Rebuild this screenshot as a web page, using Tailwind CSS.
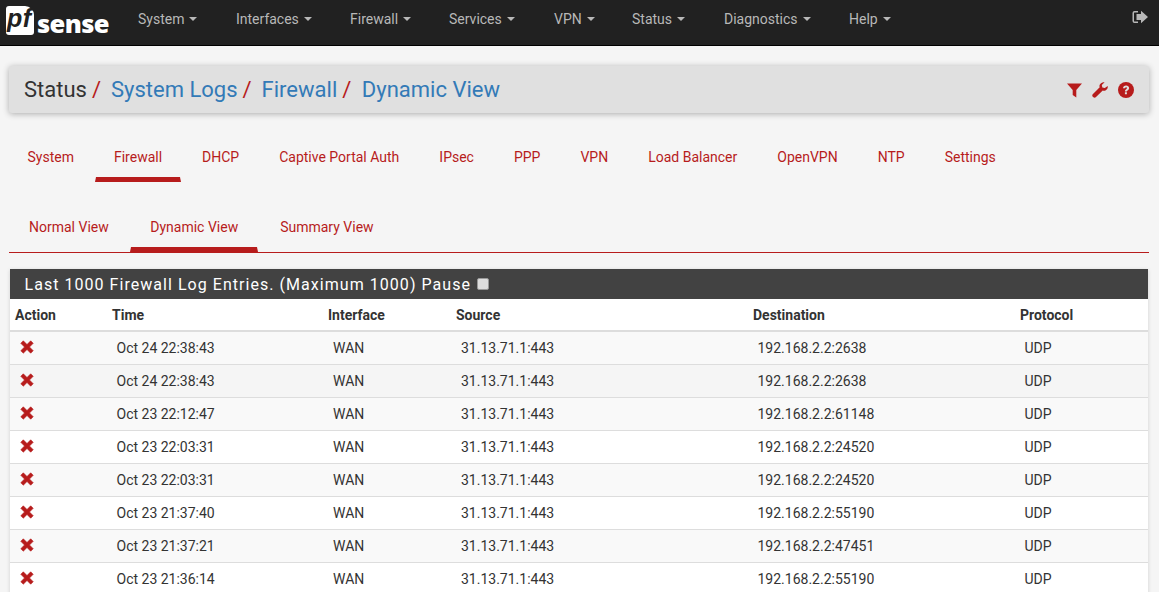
<!DOCTYPE html>
<html lang="en">
<head>
  <meta charset="UTF-8">
  <title>Status: System Logs: Firewall: Dynamic View</title>
  <script src="https://cdn.jsdelivr.net/npm/@tailwindcss/browser@4"></script>
</head>
<body class="bg-[#f5f5f5] h-[592px] overflow-hidden font-['Roboto',sans-serif] text-[14px] text-[#333]">
  <!-- navbar -->
  <nav class="h-[46px] bg-[#212121] border-b border-black flex items-start relative">
    <div class="w-[110px] h-[45px] pl-[6px] pt-[6px] flex items-start shrink-0">
      <div class="w-[28px] h-[29px] bg-white rounded-tr-[9px] rounded-l-[3px] rounded-br-[3px] text-[#212121] font-['Liberation_Sans',sans-serif] font-bold italic text-[25px] leading-[25px] tracking-[0.5px] pl-[1px]">pf</div>
      <span class="text-white font-['Open_Sans',sans-serif] font-extrabold text-[25.500px] leading-[40px] tracking-[-0.6px] ml-[3px] -mt-[3px]">sense</span>
    </div>
    <ul class="flex text-[#b8b8b8] leading-[20px] pt-[9px]">
      <li class="w-[98px] pl-[28px] flex items-center gap-[5px]">System <span class="w-0 h-0 border-x-4 border-x-transparent border-t-4 border-t-[#b8b8b8]"></span></li>
      <li class="w-[114px] pl-[28px] flex items-center gap-[5px]">Interfaces <span class="w-0 h-0 border-x-4 border-x-transparent border-t-4 border-t-[#b8b8b8]"></span></li>
      <li class="w-[99px] pl-[28px] flex items-center gap-[5px]">Firewall <span class="w-0 h-0 border-x-4 border-x-transparent border-t-4 border-t-[#b8b8b8]"></span></li>
      <li class="w-[105px] pl-[28px] flex items-center gap-[5px]">Services <span class="w-0 h-0 border-x-4 border-x-transparent border-t-4 border-t-[#b8b8b8]"></span></li>
      <li class="w-[78px] pl-[28px] flex items-center gap-[5px]">VPN <span class="w-0 h-0 border-x-4 border-x-transparent border-t-4 border-t-[#b8b8b8]"></span></li>
      <li class="w-[92px] pl-[28px] flex items-center gap-[5px]">Status <span class="w-0 h-0 border-x-4 border-x-transparent border-t-4 border-t-[#b8b8b8]"></span></li>
      <li class="w-[125px] pl-[28px] flex items-center gap-[5px]">Diagnostics <span class="w-0 h-0 border-x-4 border-x-transparent border-t-4 border-t-[#b8b8b8]"></span></li>
      <li class="pl-[28px] flex items-center gap-[5px]">Help <span class="w-0 h-0 border-x-4 border-x-transparent border-t-4 border-t-[#b8b8b8]"></span></li>
    </ul>
    <svg class="absolute left-[1132px] top-[10px] w-[16px] h-[15px]" viewBox="0 0 16 15" fill="#b8b8b8">
      <path d="M6 1H2.500A2 2 0 0 0 .5 3v8a2 2 0 0 0 2 2H6v-1.500H2.500a.5.5 0 0 1-.5-.5V3a.5.5 0 0 1 .5-.5H6z"/>
      <path d="M9 .8 16 7l-7 6.200V10H4.500V4H9z"/>
    </svg>
  </nav>

  <main class="pl-[9px] pr-[10px]">
    <!-- breadcrumb -->
    <div class="mt-[20px] h-[47px] bg-[#e0e0e0] rounded-[3px] shadow-[0_1px_6px_rgba(0,0,0,0.3)] flex items-center pl-[15px] pr-[15px] text-[22px] leading-[24px]">
      <span>Status</span><span class="text-[#b71c1c] ml-[5px]">/</span>
      <a class="text-[#337ab7] ml-[10px]">System Logs</a><span class="text-[#b71c1c] ml-[5px]">/</span>
      <a class="text-[#337ab7] ml-[10px]">Firewall</a><span class="text-[#b71c1c] ml-[5px]">/</span>
      <a class="text-[#337ab7] ml-[10.500px]">Dynamic View</a>
      <div class="ml-auto flex items-center gap-[10px] pt-[1px] text-[#b71c1c]">
        <svg class="w-[15px] h-[15px]" viewBox="0 0 15 15" fill="currentColor"><path d="M0 .5h15L9.300 7v7.500L5.700 12V7z"/></svg>
        <svg class="w-[16px] h-[16px]" viewBox="0 0 17 17" fill="currentColor"><path d="M16.700 4.200c.4 2-.6 4-2.400 4.700-1 .4-2 .4-2.900 0L4 16.300c-.7.700-1.800.7-2.500 0l-.7-.7c-.7-.7-.7-1.800 0-2.500l7.400-7.400c-.4-.9-.4-2 0-2.900C9.400.8 11.300-.2 13.400.3l-3 3 .6 2.600 2.600.6z"/></svg>
        <svg class="w-[16px] h-[16px]" viewBox="0 0 16 16"><circle cx="8" cy="8" r="8" fill="currentColor"/><path d="M5 6.200C5.200 4.500 6.400 3.500 8.100 3.500c1.700 0 3 1.100 3 2.600 0 1.200-.7 1.800-1.500 2.300-.6.400-.7.600-.7 1.200H6.900c0-1.300.4-1.900 1.200-2.400.6-.4.900-.6.900-1.100 0-.5-.4-.8-.9-.8-.6 0-1 .4-1.100 1zM6.900 10.300h2v2h-2z" fill="#e0e0e0"/></svg>
      </div>
    </div>

    <!-- log type tabs -->
    <ul class="mt-[23px] flex text-[#b71c1c] leading-[20px] h-[46px]">
      <li class="pl-[18.5px] pr-[18px] pt-[11px]">System</li>
      <li class="pl-[18px] pr-[18px] pt-[11px] ml-[3px] border-b-[5px] border-x border-b-[#b71c1c] border-x-transparent">Firewall</li>
      <li class="pl-[21px] pr-[20px] pt-[11px]">DHCP</li>
      <li class="px-[20px] pt-[11px]">Captive Portal Auth</li>
      <li class="px-[20px] pt-[11px]">IPsec</li>
      <li class="px-[20px] pt-[11px]">PPP</li>
      <li class="px-[20px] pt-[11px]">VPN</li>
      <li class="px-[20px] pt-[11px]">Load Balancer</li>
      <li class="px-[20px] pt-[11px]">OpenVPN</li>
      <li class="px-[20px] pt-[11px]">NTP</li>
      <li class="px-[20px] pt-[11px]">Settings</li>
    </ul>

    <!-- view tabs -->
    <ul class="mt-[24px] flex text-[#b71c1c] leading-[20px] h-[47px] border-b border-[#b71c1c]">
      <li class="pl-[20px] pr-[19.500px] pt-[11px]">Normal View</li>
      <li class="pl-[19.500px] pr-[19px] pt-[11px] ml-[1.500px] border-b-[5px] border-x border-b-[#b71c1c] border-x-transparent">Dynamic View</li>
      <li class="px-[22px] pt-[11px]">Summary View</li>
    </ul>

    <!-- log table -->
    <section class="mt-[16px] mx-[1px] bg-white shadow-[0_1px_4px_rgba(0,0,0,0.15)]">
      <h2 class="h-[30px] bg-[#424242] text-white text-[16px] leading-[30px] tracking-[1.04px] pl-[14.500px] flex items-center">
        <span class="pt-[2px]">Last 1000 Firewall Log Entries. (Maximum 1000) Pause</span>
        <input type="checkbox" class="ml-[6px] w-[12px] h-[12px] appearance-none bg-[#ddd] border border-[#999] rounded-[2px]">
      </h2>
      <div class="grid grid-cols-[98px_216px_128px_297px_267px_1fr] h-[33px] border-b-2 border-[#ddd] font-bold items-center pl-[4px] pt-[1px]">
        <div class="pl-[1px]">Action</div><div>Time</div><div>Interface</div><div>Source</div><div>Destination</div><div>Protocol</div>
      </div>
      <div id="rows">
        <div class="grid grid-cols-[98px_216px_128px_297px_267px_1fr] h-[33px] border-b border-[#ddd] bg-[#f9f9f9] items-center pl-[4px] pt-[1px]">
          <svg class="ml-[6px] mb-[3px] w-[14px] h-[14px]" viewBox="0 0 14 14" fill="#b71c1c" stroke="#b71c1c" stroke-width=".6" stroke-linejoin="round"><path d="M3.300.8 7 4.500 10.700.8 13.200 3.300 9.500 7l3.700 3.700-2.500 2.500L7 9.500l-3.700 3.700-2.500-2.500L4.500 7 .8 3.300z"/></svg>
          <div class="pl-[4.500px]">Oct 24 22:38:43</div><div class="pl-[5px]">WAN</div><div class="pl-[5px]">31.13.71.1:443</div><div class="pl-[4.500px]">192.168.2.2:2638</div><div class="pl-[4.500px]">UDP</div>
        </div>
        <div class="grid grid-cols-[98px_216px_128px_297px_267px_1fr] h-[33px] border-b border-[#ddd] bg-[#f5f5f5] items-center pl-[4px] pt-[1px]">
          <svg class="ml-[6px] mb-[3px] w-[14px] h-[14px]" viewBox="0 0 14 14" fill="#b71c1c" stroke="#b71c1c" stroke-width=".6" stroke-linejoin="round"><path d="M3.300.8 7 4.500 10.700.8 13.200 3.300 9.500 7l3.700 3.700-2.500 2.500L7 9.500l-3.700 3.700-2.500-2.500L4.500 7 .8 3.300z"/></svg>
          <div class="pl-[4.500px]">Oct 24 22:38:43</div><div class="pl-[5px]">WAN</div><div class="pl-[5px]">31.13.71.1:443</div><div class="pl-[4.500px]">192.168.2.2:2638</div><div class="pl-[4.500px]">UDP</div>
        </div>
        <div class="grid grid-cols-[98px_216px_128px_297px_267px_1fr] h-[33px] border-b border-[#ddd] bg-[#f9f9f9] items-center pl-[4px] pt-[1px]">
          <svg class="ml-[6px] mb-[3px] w-[14px] h-[14px]" viewBox="0 0 14 14" fill="#b71c1c" stroke="#b71c1c" stroke-width=".6" stroke-linejoin="round"><path d="M3.300.8 7 4.500 10.700.8 13.200 3.300 9.500 7l3.700 3.700-2.500 2.500L7 9.500l-3.700 3.700-2.500-2.500L4.500 7 .8 3.300z"/></svg>
          <div class="pl-[4.500px]">Oct 23 22:12:47</div><div class="pl-[5px]">WAN</div><div class="pl-[5px]">31.13.71.1:443</div><div class="pl-[4.500px]">192.168.2.2:61148</div><div class="pl-[4.500px]">UDP</div>
        </div>
        <div class="grid grid-cols-[98px_216px_128px_297px_267px_1fr] h-[33px] border-b border-[#ddd] bg-white items-center pl-[4px] pt-[1px]">
          <svg class="ml-[6px] mb-[3px] w-[14px] h-[14px]" viewBox="0 0 14 14" fill="#b71c1c" stroke="#b71c1c" stroke-width=".6" stroke-linejoin="round"><path d="M3.300.8 7 4.500 10.700.8 13.200 3.300 9.500 7l3.700 3.700-2.500 2.500L7 9.500l-3.700 3.700-2.500-2.500L4.500 7 .8 3.300z"/></svg>
          <div class="pl-[4.500px]">Oct 23 22:03:31</div><div class="pl-[5px]">WAN</div><div class="pl-[5px]">31.13.71.1:443</div><div class="pl-[4.500px]">192.168.2.2:24520</div><div class="pl-[4.500px]">UDP</div>
        </div>
        <div class="grid grid-cols-[98px_216px_128px_297px_267px_1fr] h-[33px] border-b border-[#ddd] bg-[#f9f9f9] items-center pl-[4px] pt-[1px]">
          <svg class="ml-[6px] mb-[3px] w-[14px] h-[14px]" viewBox="0 0 14 14" fill="#b71c1c" stroke="#b71c1c" stroke-width=".6" stroke-linejoin="round"><path d="M3.300.8 7 4.500 10.700.8 13.200 3.300 9.500 7l3.700 3.700-2.500 2.500L7 9.500l-3.700 3.700-2.500-2.500L4.500 7 .8 3.300z"/></svg>
          <div class="pl-[4.500px]">Oct 23 22:03:31</div><div class="pl-[5px]">WAN</div><div class="pl-[5px]">31.13.71.1:443</div><div class="pl-[4.500px]">192.168.2.2:24520</div><div class="pl-[4.500px]">UDP</div>
        </div>
        <div class="grid grid-cols-[98px_216px_128px_297px_267px_1fr] h-[33px] border-b border-[#ddd] bg-white items-center pl-[4px] pt-[1px]">
          <svg class="ml-[6px] mb-[3px] w-[14px] h-[14px]" viewBox="0 0 14 14" fill="#b71c1c" stroke="#b71c1c" stroke-width=".6" stroke-linejoin="round"><path d="M3.300.8 7 4.500 10.700.8 13.200 3.300 9.500 7l3.700 3.700-2.500 2.500L7 9.500l-3.700 3.700-2.500-2.500L4.500 7 .8 3.300z"/></svg>
          <div class="pl-[4.500px]">Oct 23 21:37:40</div><div class="pl-[5px]">WAN</div><div class="pl-[5px]">31.13.71.1:443</div><div class="pl-[4.500px]">192.168.2.2:55190</div><div class="pl-[4.500px]">UDP</div>
        </div>
        <div class="grid grid-cols-[98px_216px_128px_297px_267px_1fr] h-[33px] border-b border-[#ddd] bg-[#f9f9f9] items-center pl-[4px] pt-[1px]">
          <svg class="ml-[6px] mb-[3px] w-[14px] h-[14px]" viewBox="0 0 14 14" fill="#b71c1c" stroke="#b71c1c" stroke-width=".6" stroke-linejoin="round"><path d="M3.300.8 7 4.500 10.700.8 13.200 3.300 9.500 7l3.700 3.700-2.500 2.500L7 9.500l-3.700 3.700-2.500-2.500L4.500 7 .8 3.300z"/></svg>
          <div class="pl-[4.500px]">Oct 23 21:37:21</div><div class="pl-[5px]">WAN</div><div class="pl-[5px]">31.13.71.1:443</div><div class="pl-[4.500px]">192.168.2.2:47451</div><div class="pl-[4.500px]">UDP</div>
        </div>
        <div class="grid grid-cols-[98px_216px_128px_297px_267px_1fr] h-[33px] border-b border-[#ddd] bg-white items-center pl-[4px] pt-[1px]">
          <svg class="ml-[6px] mb-[3px] w-[14px] h-[14px]" viewBox="0 0 14 14" fill="#b71c1c" stroke="#b71c1c" stroke-width=".6" stroke-linejoin="round"><path d="M3.300.8 7 4.500 10.700.8 13.200 3.300 9.500 7l3.700 3.700-2.500 2.500L7 9.500l-3.700 3.700-2.500-2.500L4.500 7 .8 3.300z"/></svg>
          <div class="pl-[4.500px]">Oct 23 21:36:14</div><div class="pl-[5px]">WAN</div><div class="pl-[5px]">31.13.71.1:443</div><div class="pl-[4.500px]">192.168.2.2:55190</div><div class="pl-[4.500px]">UDP</div>
        </div>
      </div>
    </section>
  </main>
</body>
</html>
